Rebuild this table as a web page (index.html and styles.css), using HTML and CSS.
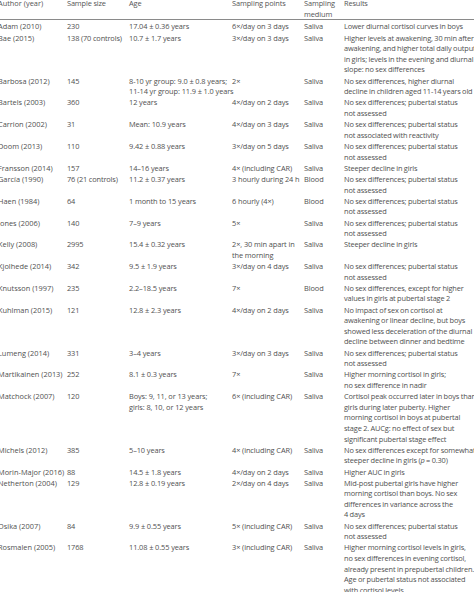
FILE: index.html
```html
<!DOCTYPE html>
<html>
<head>
<meta charset="utf-8">
<link rel="stylesheet" href="styles.css">
</head>
<body>
<table class="tbl">
<colgroup>
<col class="c1"><col class="c2"><col class="c3"><col class="c4"><col class="c5"><col class="c6">
</colgroup>
<thead>
<tr><th>Author (year)</th><th>Sample size</th><th>Age</th><th>Sampling points</th><th>Sampling<br>medium</th><th>Results</th></tr>
</thead>
<tbody>
<tr class="first"><td>Adam (2010)</td><td>230</td><td>17.04 ± 0.36 years</td><td>6×/day on 3 days</td><td>Saliva</td><td>Lower diurnal cortisol curves in boys</td></tr>
<tr><td>Bae (2015)</td><td>138 (70 controls)</td><td>10.7 ± 1.7 years</td><td>3×/day on 3 days</td><td>Saliva</td><td>Higher levels at awakening, 30 min after<br>awakening, and higher total daily output<br>in girls; levels in the evening and diurnal<br>slope: no sex differences</td></tr>
<tr><td>Barbosa (2012)</td><td>145</td><td>8-10 yr group: 9.0 ± 0.8 years;<br>11-14 yr group: 11.9 ± 1.0 years</td><td>2×</td><td>Saliva</td><td>No sex differences, higher diurnal<br>decline in children aged 11-14 years old</td></tr>
<tr><td>Bartels (2003)</td><td>360</td><td>12 years</td><td>4×/day on 2 days</td><td>Saliva</td><td>No sex differences; pubertal status<br>not assessed</td></tr>
<tr><td>Carrion (2002)</td><td>31</td><td>Mean: 10.9 years</td><td>4×/day on 3 days</td><td>Saliva</td><td>No sex differences; pubertal status<br>not associated with reactivity</td></tr>
<tr><td>Doom (2013)</td><td>110</td><td>9.42 ± 0.88 years</td><td>3×/day on 5 days</td><td>Saliva</td><td>No sex differences; pubertal status<br>not assessed</td></tr>
<tr><td>Fransson (2014)</td><td>157</td><td>14–16 years</td><td>4× (including CAR)</td><td>Saliva</td><td>Steeper decline in girls</td></tr>
<tr><td>García (1990)</td><td>76 (21 controls)</td><td>11.2 ± 0.37 years</td><td>3 hourly during 24 h</td><td>Blood</td><td>No sex differences; pubertal status<br>not assessed</td></tr>
<tr><td>Haen (1984)</td><td>64</td><td>1 month to 15 years</td><td>6 hourly (4×)</td><td>Blood</td><td>No sex differences; pubertal status<br>not assessed</td></tr>
<tr><td>Jones (2006)</td><td>140</td><td>7–9 years</td><td>5×</td><td>Saliva</td><td>No sex differences; pubertal status<br>not assessed</td></tr>
<tr><td>Kelly (2008)</td><td>2995</td><td>15.4 ± 0.32 years</td><td>2×, 30 min apart in<br>the morning</td><td>Saliva</td><td>Steeper decline in girls</td></tr>
<tr><td>Kjolhede (2014)</td><td>342</td><td>9.5 ± 1.9 years</td><td>3×/day on 4 days</td><td>Saliva</td><td>No sex differences; pubertal status<br>not assessed</td></tr>
<tr><td>Knutsson (1997)</td><td>235</td><td>2.2–18.5 years</td><td>7×</td><td>Blood</td><td>No sex differences, except for higher<br>values in girls at pubertal stage 2</td></tr>
<tr><td>Kuhlman (2015)</td><td>121</td><td>12.8 ± 2.3 years</td><td>4×/day on 2 days</td><td>Saliva</td><td>No impact of sex on cortisol at<br>awakening or linear decline, but boys<br>showed less deceleration of the diurnal<br>decline between dinner and bedtime</td></tr>
<tr><td>Lumeng (2014)</td><td>331</td><td>3–4 years</td><td>3×/day on 3 days</td><td>Saliva</td><td>No sex differences; pubertal status<br>not assessed</td></tr>
<tr><td>Martikainen (2013)</td><td>252</td><td>8.1 ± 0.3 years</td><td>7×</td><td>Saliva</td><td>Higher morning cortisol in girls;<br>no sex difference in nadir</td></tr>
<tr><td>Matchock (2007)</td><td>120</td><td>Boys: 9, 11, or 13 years;<br>girls: 8, 10, or 12 years</td><td>6× (including CAR)</td><td>Saliva</td><td>Cortisol peak occurred later in boys than<br>girls during later puberty. Higher<br>morning cortisol in boys at pubertal<br>stage 2. AUCg: no effect of sex but<br>significant pubertal stage effect</td></tr>
<tr><td>Michels (2012)</td><td>385</td><td>5–10 years</td><td>4× (including CAR)</td><td>Saliva</td><td>No sex differences except for somewhat<br>steeper decline in girls (<i>p</i> = 0.30)</td></tr>
<tr><td>Morin-Major (2016)</td><td>88</td><td>14.5 ± 1.8 years</td><td>4×/day on 2 days</td><td>Saliva</td><td>Higher AUC in girls</td></tr>
<tr><td>Netherton (2004)</td><td>129</td><td>12.8 ± 0.19 years</td><td>2×/day on 4 days</td><td>Saliva</td><td>Mid-post pubertal girls have higher<br>morning cortisol than boys. No sex<br>differences in variance across the<br>4 days</td></tr>
<tr><td>Osika (2007)</td><td>84</td><td>9.9 ± 0.55 years</td><td>5× (including CAR)</td><td>Saliva</td><td>No sex differences; pubertal status<br>not assessed</td></tr>
<tr><td>Rosmalen (2005)</td><td>1768</td><td>11.08 ± 0.55 years</td><td>3× (including CAR)</td><td>Saliva</td><td>Higher morning cortisol levels in girls,<br>no sex differences in evening cortisol,<br>already present in prepubertal children.<br>Age or pubertal status not associated<br>with cortisol levels</td></tr>
</tbody>
</table>
</body>
</html>
```
FILE: styles.css
```css
html, body {
  margin: 0;
  padding: 0;
  background: #ffffff;
  overflow: hidden;
}
body {
  font-family: "Open Sans", "DejaVu Sans", sans-serif;
  font-size: 7.4px;
  color: #505050;
}
.tbl {
  border-collapse: collapse;
  table-layout: fixed;
  width: 500px;
  margin-left: -2px;
  margin-top: -2px;
}
.c1 { width: 69px; }
.c2 { width: 62px; }
.c3 { width: 103px; }
.c4 { width: 72px; }
.c5 { width: 40px; }
.c6 { width: 154px; }
.tbl th, .tbl td {
  padding: 0.3px 0;
  text-align: left;
  vertical-align: top;
  white-space: nowrap;
  line-height: 10.6px;
  font-weight: normal;
  overflow: visible;
  letter-spacing: -0.1px;
}
.tbl th:first-child, .tbl td:first-child {
  letter-spacing: 0;
}
.tbl th:nth-child(2), .tbl td:nth-child(2) {
  letter-spacing: -0.15px;
}
.tbl th:nth-child(6), .tbl td:nth-child(6) {
  letter-spacing: -0.15px;
  word-spacing: -0.25px;
}
.tbl th {
  padding-bottom: 0;
  border-bottom: 1px solid #8a8a8a;
  color: #555555;
}
.tbl tr.first td {
  padding-top: 0.5px;
  padding-bottom: 0.8px;
}
```
